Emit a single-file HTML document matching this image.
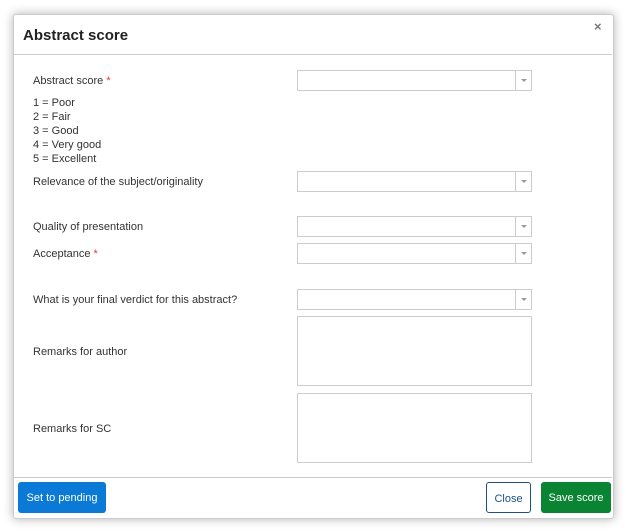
<!DOCTYPE html>
<html><head><style>
body{margin:0;width:626px;height:532px;background:#fff;font-family:"Liberation Sans",sans-serif;overflow:hidden;position:relative}
.modal{position:absolute;left:13px;top:14px;width:599px;height:503px;border:1px solid #ccc;border-radius:3px;background:#fff;box-shadow:0 0 10px rgba(0,0,0,.3)}
.a{position:absolute}
.lbl{position:absolute;left:33px;font-size:11px;color:#333}
.req{color:#e33}
.sel{position:absolute;left:297px;width:233px;height:19px;border:1px solid #ccc;background:#fff}
.sel:after{content:"";position:absolute;right:0;top:0;width:15px;height:19px;border-left:1px solid #ccc}
.sel:before{content:"";position:absolute;right:4px;top:8px;border:3px solid transparent;border-top:3px solid #999}
.ta{position:absolute;left:297px;width:233px;border:1px solid #ccc}
.btn{position:absolute;top:482px;height:31px;border-radius:3px;font-size:11px;line-height:32px;text-align:center;box-sizing:border-box}
</style></head><body>
<div class="modal"></div>
<div class="a" style="left:14px;top:54px;width:598px;border-top:1px solid #ccc"></div>
<div class="a" style="left:14px;top:477px;width:598px;border-top:1px solid #ccc"></div>
<div class="a" style="left:23px;top:27px;font-size:15px;font-weight:bold;color:#222">Abstract score</div>
<div class="a" style="left:594px;top:19px;font-size:13px;font-weight:bold;color:#777">×</div>
<div class="lbl" style="top:75px">Abstract score <span class="req">*</span></div>
<div class="lbl" style="top:96px;line-height:14px">1 = Poor<br>2 = Fair<br>3 = Good<br>4 = Very good<br>5 = Excellent</div>
<div class="lbl" style="top:176px">Relevance of the subject/originality</div>
<div class="lbl" style="top:221px">Quality of presentation</div>
<div class="lbl" style="top:248px">Acceptance <span class="req">*</span></div>
<div class="lbl" style="top:294px">What is your final verdict for this abstract?</div>
<div class="lbl" style="top:346px">Remarks for author</div>
<div class="lbl" style="top:423px">Remarks for SC</div>
<div class="sel" style="top:70px"></div>
<div class="sel" style="top:171px"></div>
<div class="sel" style="top:216px"></div>
<div class="sel" style="top:243px"></div>
<div class="sel" style="top:289px"></div>
<div class="ta" style="top:316px;height:68px"></div>
<div class="ta" style="top:393px;height:68px"></div>
<div class="btn" style="left:18px;width:88px;background:#0a7ad6;color:#fff">Set to pending</div>
<div class="btn" style="left:486px;width:45px;border:1px solid #1e4f8a;color:#1e4f8a;background:#fff">Close</div>
<div class="btn" style="left:541px;width:70px;background:#0a8433;color:#fff">Save score</div>
</body></html>
